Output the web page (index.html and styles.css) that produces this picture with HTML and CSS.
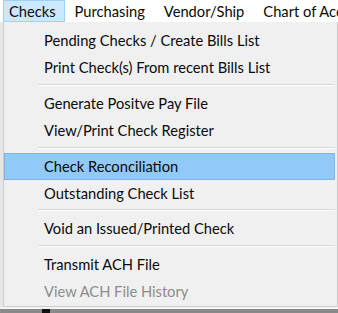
FILE: index.html
```html
<!DOCTYPE html>
<html lang="en">

<head>
  <meta charset="UTF-8">
  <meta name="viewport" content="width=device-width, initial-scale=1.0">
  <title>Checks menu</title>
  <link rel="stylesheet" href="styles.css">
</head>

<body>
  <div class="window">
    <div class="menubar">
      <div class="menubar-item active">Checks</div>
      <div class="menubar-item">Purchasing</div>
      <div class="menubar-item">Vendor/Ship</div>
      <div class="menubar-item">Chart of Accounts</div>
    </div>
    <div class="dropdown">
      <div class="menu-item">Pending Checks / Create Bills List</div>
      <div class="menu-item">Print Check(s) From recent Bills List</div>
      <div class="separator"></div>
      <div class="menu-item">Generate Positve Pay File</div>
      <div class="menu-item">View/Print Check Register</div>
      <div class="separator"></div>
      <div class="menu-item hover">Check Reconciliation</div>
      <div class="menu-item">Outstanding Check List</div>
      <div class="separator"></div>
      <div class="menu-item">Void an Issued/Printed Check</div>
      <div class="separator"></div>
      <div class="menu-item">Transmit ACH File</div>
      <div class="menu-item disabled">View ACH File History</div>
    </div>
    <div class="below">
      <div class="below-mark"></div>
    </div>
  </div>
</body>

</html>
```

FILE: styles.css
```css
* {
  margin: 0;
  padding: 0;
  box-sizing: border-box;
}

body {
  background-color: #ffffff;
  font-family: Lato, "Open Sans", sans-serif;
  font-size: 14.7px;
  color: #0a0a0a;
  width: 338px;
  height: 313px;
  overflow: hidden;
}

.window {
  display: flex;
  flex-direction: column;
  width: 338px;
  height: 313px;
  background-color: #e6e6e6;
}

.menubar {
  display: flex;
  height: 22px;
  background-color: #ffffff;
  padding-left: 3px;
  white-space: nowrap;
  overflow: hidden;
}

.menubar-item {
  height: 22px;
  line-height: 20px;
  padding: 0 8px 0 5px;
  margin-right: 4px;
  border: 1px solid transparent;
}

.menubar-item.active {
  background-color: #cce8ff;
  border-color: #99d1ff;
}

.dropdown {
  margin-left: 3px;
  width: 335px;
  height: 285px;
  background-color: #f0f0f0;
  border: 1px solid #cccccc;
  border-top: none;
  padding: 5px 2px 0 0;
  display: flex;
  flex-direction: column;
}

.menu-item {
  height: 27px;
  line-height: 25px;
  padding-left: 39px;
  border: 1px solid transparent;
  white-space: nowrap;
}

.menu-item:nth-child(n+7) {
  height: 26.7px;
}

.menu-item.hover {
  background-color: #91c9f7;
  border-color: #7eb4ea;
}

.menu-item.disabled {
  color: #8c8c8c;
}

.separator {
  height: 1px;
  margin: 3px 0 4px 34px;
  background-color: #d7d7d7;
  border-bottom: 1px solid #ffffff;
  box-sizing: content-box;
}

.below {
  flex: 1;
  background-color: #f4f4f4;
  border-bottom: 4px solid #8a8a8a;
  position: relative;
}

.below-mark {
  position: absolute;
  left: 42px;
  bottom: -4px;
  width: 8px;
  height: 4px;
  background-color: #111111;
}
```
